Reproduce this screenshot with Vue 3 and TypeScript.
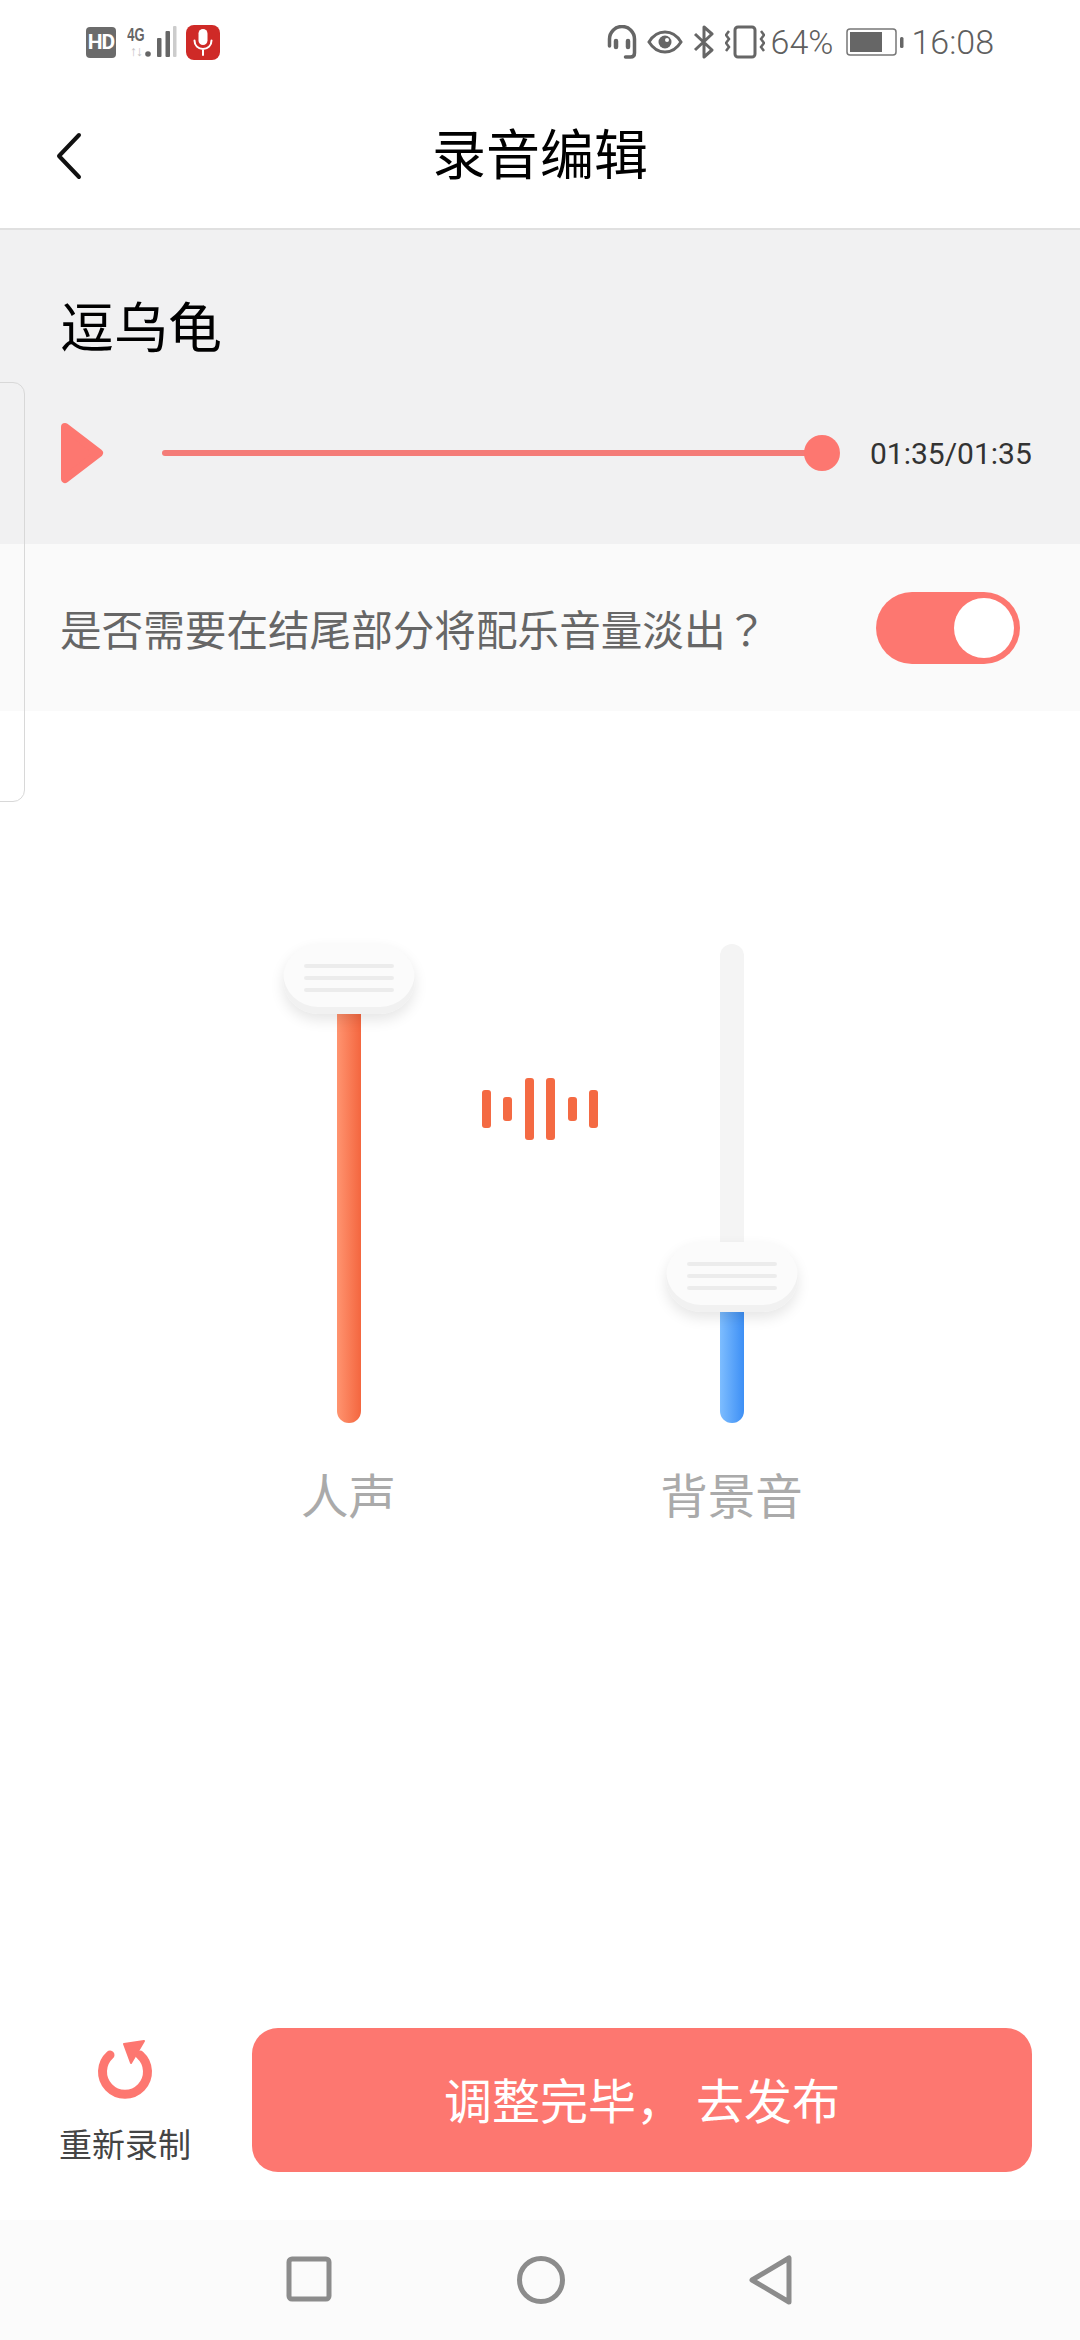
<template>
  <div class="page">
    <div class="side-card"></div>

    <header class="status-bar">
      <div class="status-left">
        <span class="hd">HD</span>
        <span class="net">
          <span class="net-type">4G</span>
          <span class="net-arrows">↑↓</span>
        </span>
        <svg class="signal" width="32" height="32" viewBox="0 0 32 32">
          <circle cx="3" cy="28" r="2.800" fill="#666" />
          <rect x="12" y="12" width="4.500" height="19" rx="1" fill="#666" />
          <rect x="20.500" y="5" width="4.500" height="26" rx="1" fill="#666" />
          <rect x="28" y="0" width="3.500" height="31" rx="1" fill="#ccc" />
        </svg>
        <span class="mic">
          <svg width="24" height="28" viewBox="0 0 24 28" fill="none">
            <rect x="7.500" y="1" width="9" height="16" rx="4.500" fill="#fff" />
            <path d="M3.500 12.500c0 5 3.600 8.500 8.500 8.500s8.500-3.500 8.500-8.500M12 21v6" stroke="#fff" stroke-width="2" stroke-linecap="round" />
          </svg>
        </span>
      </div>
      <div class="status-right">
        <svg width="30" height="34" viewBox="0 0 30 34" fill="none" stroke="#666" stroke-width="3.500" stroke-linecap="round">
          <path d="M2.500 21v-7a12.500 12.500 0 0 1 25 0v14c0 2.500-1.500 4-4 4h-5" />
          <path d="M9 16v6M21 16v6" stroke-width="4.500" />
        </svg>
        <svg width="36" height="24" viewBox="0 0 36 24" fill="none">
          <path d="M2 12C6 5.500 11.500 2 18 2s12 3.500 16 10c-4 6.500-9.500 10-16 10S6 18.500 2 12z" stroke="#666" stroke-width="3" />
          <circle cx="18" cy="12" r="6.500" fill="#666" />
          <circle cx="20" cy="10" r="2" fill="#fff" />
        </svg>
        <svg width="22" height="34" viewBox="0 0 22 34" fill="none" stroke="#666" stroke-width="3" stroke-linejoin="round">
          <path d="M2 9l17 16-8 7V2l8 7L2 25" />
        </svg>
        <svg class="vibrate" width="40" height="34" viewBox="1 0 40 34" fill="none" stroke="#666">
          <rect x="11" y="2" width="20" height="30" rx="3" stroke-width="3" />
          <path d="M5 6l-3 4 3 4-3 4 3 4-3 4M37 6l3 4-3 4 3 4-3 4 3 4" stroke-width="2.500" />
        </svg>
        <span class="status-text percent">64%</span>
        <svg class="battery" width="58" height="28" viewBox="0 0 58 28" fill="none">
          <rect x="1" y="1" width="49" height="26" rx="3" stroke="#777" stroke-width="1.500" />
          <rect x="4" y="4" width="32" height="20" fill="#666" />
          <rect x="54" y="9" width="3.500" height="11" rx="1.500" fill="#666" />
        </svg>
        <span class="status-text time">16:08</span>
      </div>
    </header>

    <nav class="nav-bar">
      <svg class="back" width="26" height="48" viewBox="0 0 26 48" fill="none">
        <path d="M23 3L3 24l20 21" stroke="#111" stroke-width="4" stroke-linecap="round" stroke-linejoin="round" />
      </svg>
      <h1 class="nav-title">录音编辑</h1>
    </nav>

    <section class="player">
      <h2 class="song-name">逗乌龟</h2>
      <div class="player-row">
        <svg class="play" width="44" height="62" viewBox="0 0 44 62">
          <path d="M5 5l34 26L5 57z" fill="#fd7770" stroke="#fd7770" stroke-width="8" stroke-linejoin="round" />
        </svg>
        <div class="progress">
          <span class="progress-thumb"></span>
        </div>
        <span class="duration">01:35/01:35</span>
      </div>
    </section>

    <section class="fade-row">
      <span class="fade-label">是否需要在结尾部分将配乐音量淡出<span class="fade-mark">？</span></span>
      <span class="switch"><span class="switch-dot"></span></span>
    </section>

    <section class="mixer">
      <div class="slider-col">
        <div class="track">
          <div class="fill fill-voice" :style="{ height: trackHeight - voiceTop - 30 + 'px' }"></div>
          <div class="knob" :style="{ top: voiceTop + 'px' }">
            <span class="knob-line"></span>
            <span class="knob-line"></span>
            <span class="knob-line"></span>
          </div>
        </div>
        <span class="slider-label">人声</span>
      </div>

      <div class="wave">
        <span
          v-for="(h, idx) in waveBars"
          :key="idx"
          class="wave-bar"
          :style="{ height: h + 'px' }"
        ></span>
      </div>

      <div class="slider-col">
        <div class="track">
          <div class="fill fill-music" :style="{ height: trackHeight - musicTop - 30 + 'px' }"></div>
          <div class="knob" :style="{ top: musicTop + 'px' }">
            <span class="knob-line"></span>
            <span class="knob-line"></span>
            <span class="knob-line"></span>
          </div>
        </div>
        <span class="slider-label">背景音</span>
      </div>
    </section>

    <footer class="actions">
      <div class="redo">
        <svg class="redo-icon" width="60" height="64" viewBox="0 0 60 64" fill="none">
          <path d="M15 17a22.500 22.500 0 1 0 30 0" stroke="#fd7770" stroke-width="9" stroke-linecap="round" />
          <path d="M29 6l20-3-13 22z" fill="#fd7770" stroke="#fd7770" stroke-width="2" stroke-linejoin="round" />
        </svg>
        <span class="redo-label">重新录制</span>
      </div>
      <button class="publish">调整完毕， 去发布</button>
    </footer>

    <div class="sys-nav">
      <svg width="48" height="48" viewBox="0 0 48 48" fill="none" stroke="#8c8c8c" stroke-width="5">
        <rect x="3" y="3" width="40" height="40" rx="3" />
      </svg>
      <svg width="50" height="50" viewBox="0 0 50 50" fill="none" stroke="#8c8c8c" stroke-width="5">
        <circle cx="25" cy="25" r="21.500" />
      </svg>
      <svg width="46" height="52" viewBox="0 0 46 52" fill="none" stroke="#8c8c8c" stroke-width="5" stroke-linejoin="round">
        <path d="M41 4v44L4 26z" />
      </svg>
    </div>
  </div>
</template>

<script setup lang="ts">
const trackHeight = 479;
const voiceTop = 0;
const musicTop = 298;
const waveBars: number[] = [38, 24, 62, 62, 24, 38];
</script>

<style scoped>
.page {
  position: relative;
  width: 1080px;
  height: 2340px;
  display: flex;
  flex-direction: column;
  background: #fff;
  overflow: hidden;
  font-family: "Roboto", "Noto Sans CJK SC", sans-serif;
}

.side-card {
  position: absolute;
  left: -20px;
  top: 382px;
  width: 43px;
  height: 418px;
  border: 1px solid #d8d8d8;
  border-radius: 12px;
  z-index: 2;
}

.status-bar {
  height: 72px;
  padding: 12px 86px 0;
  box-sizing: border-box;
  display: flex;
  justify-content: space-between;
  align-items: center;
}

.status-left,
.status-right {
  display: flex;
  align-items: center;
}

.hd {
  width: 30px;
  height: 31px;
  background: #6b6b6b;
  border-radius: 4px;
  color: #fff;
  font-size: 21px;
  font-weight: 700;
  line-height: 31px;
  text-align: center;
  letter-spacing: -1px;
}

.net {
  width: 18px;
  margin-left: 11px;
  display: flex;
  flex-direction: column;
  align-items: center;
  font-family: "Liberation Sans", sans-serif;
}

.net-type {
  font-size: 18px;
  line-height: 18px;
  font-weight: 700;
  color: #666;
  transform: scaleX(0.72);
}

.net-arrows {
  font-size: 14px;
  line-height: 14px;
  font-weight: 700;
  color: #c4c4c4;
  letter-spacing: -1px;
  white-space: nowrap;
}

.mic {
  width: 34px;
  height: 35px;
  margin-left: 9px;
  background: #cf2a27;
  border-radius: 8px;
  display: flex;
  align-items: center;
  justify-content: center;
}

.status-right {
  gap: 10px;
}

.status-text {
  font-size: 34px;
  font-weight: 300;
  color: #5f5f5f;
  line-height: 40px;
}

.percent {
  margin-left: -4px;
  margin-right: 3px;
}

.time {
  margin-left: -3px;
}

.nav-bar {
  position: relative;
  height: 158px;
  flex: none;
  padding-top: 14px;
  box-sizing: border-box;
  border-bottom: 2px solid #e0e0e0;
  display: flex;
  align-items: center;
  justify-content: center;
}

.back {
  position: absolute;
  left: 56px;
  top: 60px;
}

.nav-title {
  margin: 0;
  font-size: 54px;
  font-weight: 400;
  color: #000;
  line-height: 70px;
}

.player {
  height: 314px;
  flex: none;
  background: #f1f1f2;
  padding: 65px 32px 0 60px;
  box-sizing: border-box;
}

.song-name {
  margin: 0;
  font-size: 54px;
  font-weight: 400;
  color: #000;
  line-height: 70px;
}

.player-row {
  margin-top: 56px;
  display: flex;
  align-items: center;
  height: 64px;
}

.play {
  flex: none;
}

.progress {
  position: relative;
  width: 660px;
  height: 6px;
  margin-left: 58px;
  background: #f47c78;
  border-radius: 3px;
}

.progress-thumb {
  position: absolute;
  right: -18px;
  top: -15px;
  width: 36px;
  height: 36px;
  border-radius: 50%;
  background: #fd7770;
}

.duration {
  margin-left: 48px;
  font-size: 30px;
  color: #333;
  white-space: nowrap;
}

.fade-row {
  height: 167px;
  flex: none;
  background: #fafafa;
  padding: 0 60px;
  box-sizing: border-box;
  display: flex;
  align-items: center;
  justify-content: space-between;
}

.fade-label {
  font-size: 41.600px;
  color: #666;
}

.fade-mark {
  font-family: "Noto Sans CJK TC", sans-serif;
}

.switch {
  width: 144px;
  height: 72px;
  border-radius: 36px;
  background: #fd7770;
  display: flex;
  align-items: center;
  justify-content: flex-end;
  padding-right: 6px;
  box-sizing: border-box;
}

.switch-dot {
  width: 60px;
  height: 60px;
  border-radius: 50%;
  background: #fff;
}

.mixer {
  flex: 1;
  padding-top: 233px;
  display: flex;
  justify-content: center;
  align-items: flex-start;
  gap: 33px;
}

.slider-col {
  width: 200px;
  display: flex;
  flex-direction: column;
  align-items: center;
}

.track {
  position: relative;
  width: 24px;
  height: 479px;
  background: #f4f4f4;
  border-radius: 12px;
}

.fill {
  position: absolute;
  left: 0;
  bottom: 0;
  width: 100%;
  border-radius: 0 0 12px 12px;
}

.fill-voice {
  background: linear-gradient(90deg, #ff9470, #f4663f);
}

.fill-music {
  background: linear-gradient(90deg, #7dbdff, #3d8ff5);
}

.knob {
  position: absolute;
  left: 50%;
  width: 132px;
  height: 70px;
  margin-left: -66px;
  box-sizing: border-box;
  border-radius: 35px;
  background: #fbfbfb;
  box-shadow: inset 0 -7px 0 #f1f1f1, 0 6px 14px rgba(0, 0, 0, 0.1);
  display: flex;
  flex-direction: column;
  align-items: center;
  justify-content: flex-start;
  gap: 8px;
  padding-top: 20px;
}

.knob-line {
  width: 90px;
  height: 4px;
  flex: none;
  border-radius: 2px;
  background: #ececec;
}

.slider-label {
  margin-top: 44px;
  font-size: 47.500px;
  line-height: 62px;
  color: #aaa;
}

.wave {
  width: 117px;
  height: 62px;
  margin-top: 134px;
  display: flex;
  justify-content: space-between;
  align-items: center;
}

.wave-bar {
  width: 9px;
  border-radius: 3px;
  background: #f46a43;
}

.actions {
  flex: none;
  height: 192px;
  padding: 0 48px 0 60px;
  box-sizing: border-box;
  display: flex;
  align-items: flex-start;
}

.redo {
  width: 130px;
  display: flex;
  flex-direction: column;
  align-items: center;
  flex: none;
}

.redo-icon {
  margin-top: 10px;
}

.redo-label {
  margin-top: 22px;
  font-size: 33px;
  line-height: 44px;
  color: #444;
  white-space: nowrap;
}

.publish {
  flex: 1;
  height: 144px;
  margin-left: 62px;
  padding-bottom: 6px;
  border: none;
  border-radius: 26px;
  background: #fd7770;
  color: #fff;
  font-family: inherit;
  font-size: 48px;
  white-space: pre;
}

.sys-nav {
  flex: none;
  height: 120px;
  background: #fbfbfb;
  display: flex;
  align-items: center;
  justify-content: center;
  gap: 182px;
}
</style>
